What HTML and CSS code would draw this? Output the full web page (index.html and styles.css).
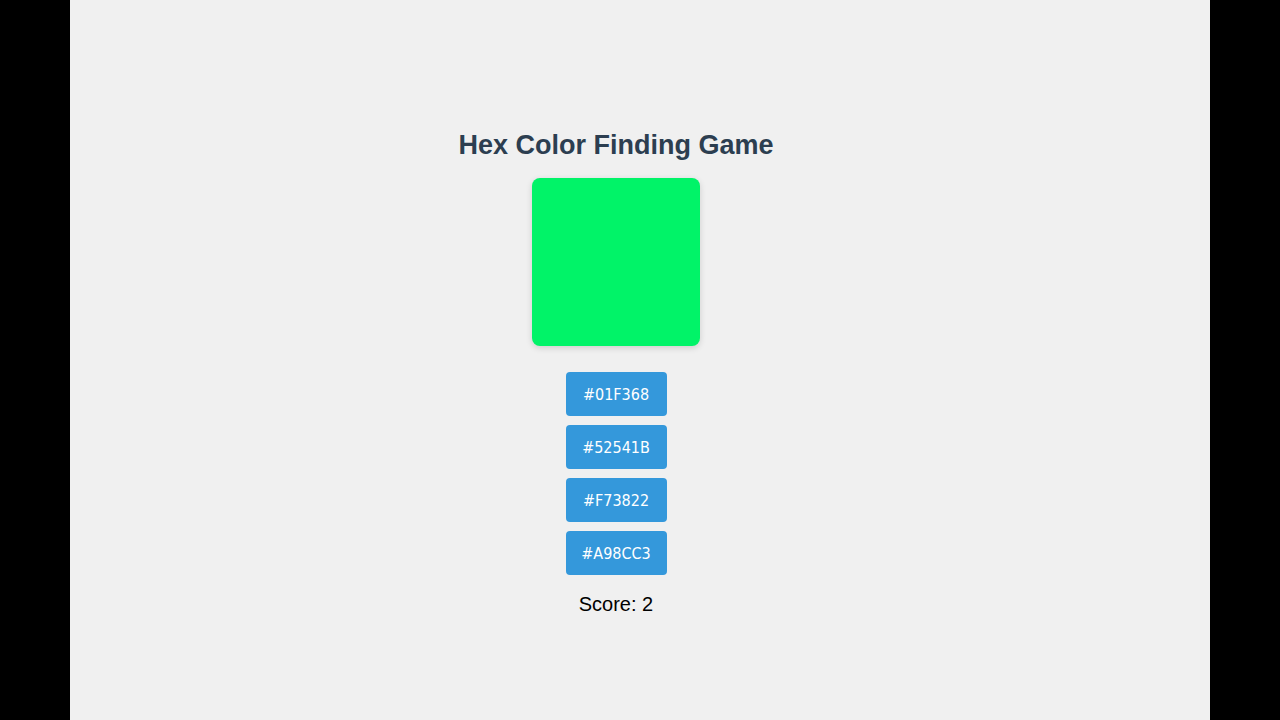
FILE: index.html
```html
<!DOCTYPE html>
<html>
<head>
<meta charset="utf-8">
<link rel="stylesheet" href="styles.css">
</head>
<body>
<div class="frame">
  <div class="game">
    <h1 class="title">Hex Color Finding Game</h1>
    <div class="swatch"></div>
    <div class="options">
      <button class="opt">#01F368</button>
      <button class="opt">#52541B</button>
      <button class="opt">#F73822</button>
      <button class="opt">#A98CC3</button>
    </div>
    <div class="score">Score: 2</div>
  </div>
</div>
</body>
</html>
```
FILE: styles.css
```css
html, body {
  margin: 0;
  padding: 0;
  background: #000;
  height: 720px;
  overflow: hidden;
}
.frame {
  margin-left: 70px;
  width: 1140px;
  height: 720px;
  background: #f0f0f0;
  box-sizing: border-box;
  padding-right: 48px;
  padding-top: 130px;
}
.game {
  display: flex;
  flex-direction: column;
  align-items: center;
  font-family: "Liberation Sans", Arial, sans-serif;
}
.title {
  margin: 0;
  font-size: 27px;
  line-height: 30px;
  font-weight: bold;
  color: #2c3e50;
}
.swatch {
  margin-top: 18px;
  width: 168px;
  height: 168px;
  border-radius: 8px;
  background: #01f368;
  box-shadow: 0 2px 6px rgba(0,0,0,0.15);
}
.options {
  margin-top: 26px;
  display: flex;
  flex-direction: column;
  gap: 9px;
}
.opt {
  width: 101px;
  height: 44px;
  border: none;
  border-radius: 4px;
  background: #3498db;
  color: #fff;
  font-family: "DejaVu Sans Condensed", "DejaVu Sans", Verdana, sans-serif;
  font-stretch: condensed;
  font-size: 16px;
  padding: 0;
}
.score {
  margin-top: 17px;
  font-size: 20px;
  line-height: 24px;
  color: #000;
}
```
